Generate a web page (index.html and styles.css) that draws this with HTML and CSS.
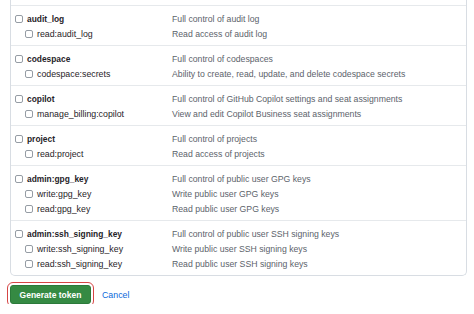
FILE: index.html
```html
<!DOCTYPE html>
<html lang="en">
<head>
  <meta charset="UTF-8">
  <title>New personal access token</title>
  <link rel="stylesheet" href="styles.css">
</head>
<body>

  <!-- scopes list (scrolled, top cut off) -->
  <div class="scopes">
    <div class="scope">
      <label class="item top"><span class="box"></span>audit_log</label>
      <span class="desc">Full control of audit log</span>
      <label class="item sub"><span class="box"></span>read:audit_log</label>
      <span class="desc">Read access of audit log</span>
    </div>
    <div class="scope">
      <label class="item top"><span class="box"></span>codespace</label>
      <span class="desc">Full control of codespaces</span>
      <label class="item sub"><span class="box"></span>codespace:secrets</label>
      <span class="desc">Ability to create, read, update, and delete codespace secrets</span>
    </div>
    <div class="scope">
      <label class="item top"><span class="box"></span>copilot</label>
      <span class="desc">Full control of GitHub Copilot settings and seat assignments</span>
      <label class="item sub"><span class="box"></span>manage_billing:copilot</label>
      <span class="desc">View and edit Copilot Business seat assignments</span>
    </div>
    <div class="scope">
      <label class="item top"><span class="box"></span>project</label>
      <span class="desc">Full control of projects</span>
      <label class="item sub"><span class="box"></span>read:project</label>
      <span class="desc">Read access of projects</span>
    </div>
    <div class="scope">
      <label class="item top"><span class="box"></span>admin:gpg_key</label>
      <span class="desc">Full control of public user GPG keys</span>
      <label class="item sub"><span class="box"></span>write:gpg_key</label>
      <span class="desc">Write public user GPG keys</span>
      <label class="item sub"><span class="box"></span>read:gpg_key</label>
      <span class="desc">Read public user GPG keys</span>
    </div>
    <div class="scope">
      <label class="item top"><span class="box"></span>admin:ssh_signing_key</label>
      <span class="desc">Full control of public user SSH signing keys</span>
      <label class="item sub"><span class="box"></span>write:ssh_signing_key</label>
      <span class="desc">Write public user SSH signing keys</span>
      <label class="item sub"><span class="box"></span>read:ssh_signing_key</label>
      <span class="desc">Read public user SSH signing keys</span>
    </div>
  </div>

  <div class="actions">
    <button class="btn-primary">Generate token</button>
    <a class="cancel" href="#">Cancel</a>
  </div>

</body>
</html>
```

FILE: styles.css
```css
body {
  margin: 0;
  background: #fff;
  font-family: "Liberation Sans", Arial, sans-serif;
  font-size: 8.8px;
  color: #1f2328;
}

.scopes {
  margin-left: 10px;
  width: 455px;
  padding-top: 5px;
  border: 1px solid #d8dde3;
  border-top: none;
  border-radius: 0 0 5px 5px;
}

.scope {
  display: grid;
  grid-template-columns: 157px 1fr;
  grid-auto-rows: 15px;
  align-items: center;
  padding: 5px 0 4px 4px;
  border-top: 1px solid #e6e9ec;
}

.item {
  display: flex;
  align-items: center;
  gap: 4px;
}

.item.top {
  font-size: 8.4px;
  font-weight: bold;
}

.item.sub {
  padding-left: 10px;
}

.box {
  width: 6px;
  height: 6px;
  border: 1px solid #959ca4;
  border-radius: 2px;
  background: #fff;
}

.desc {
  font-size: 8.7px;
  color: #5c636b;
}

.actions {
  display: flex;
  align-items: center;
  gap: 11px;
  margin: 9px 0 0 10px;
}

.btn-primary {
  width: 81px;
  height: 19px;
  padding: 0;
  border: 1px solid #2b7a3a;
  border-radius: 3px;
  background: #358a43;
  color: #fff;
  font-family: inherit;
  font-size: 8.5px;
  font-weight: bold;
  outline: 1.5px solid #d64545;
  outline-offset: 2px;
}

.cancel {
  color: #0969da;
  font-size: 8.8px;
  text-decoration: none;
}
```
